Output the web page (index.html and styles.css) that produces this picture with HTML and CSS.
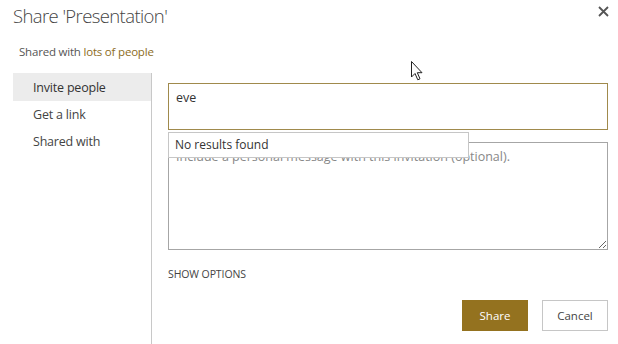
FILE: index.html
```html
<!DOCTYPE html>
<html lang="en">
<head>
    <meta charset="UTF-8">
    <meta name="viewport" content="width=device-width, initial-scale=1.0">
    <title>Share</title>
    <link rel="stylesheet" href="styles.css">
</head>
<body>
    <div id="dialog">
        <div id="header">
            <h1 id="title">Share 'Presentation'</h1>
            <button class="close" title="Close">
                <svg width="11" height="11" viewBox="0 0 11 11"><path d="M1 1 L10 10 M10 1 L1 10" stroke="#555" stroke-width="1.8" fill="none"/></svg>
            </button>
        </div>
        <div id="sharedWith">Shared with <a href="#">lots of people</a></div>

        <div id="content">
            <div id="nav">
                <div class="navItem selected">Invite people</div>
                <div class="navItem">Get a link</div>
                <div class="navItem">Shared with</div>
            </div>
            <div id="main">
                <div class="pickerWrap">
                    <div id="picker">eve</div>
                    <div id="suggest">No results found</div>
                </div>
                <textarea id="message" placeholder="Include a personal message with this invitation (optional)."></textarea>
                <div id="options">SHOW OPTIONS</div>
                <div id="actions">
                    <button class="btn primary">Share</button>
                    <button class="btn">Cancel</button>
                </div>
            </div>
        </div>
        <svg class="cursor" width="14" height="22" viewBox="0 0 14 22"><path d="M1.5 1.5 L1.5 17 L5 13.5 L7.8 19.8 L10 18.8 L7.3 12.7 L12 12.7 Z" fill="#fff" stroke="#222" stroke-width="1"/></svg>
    </div>
</body>
</html>
```

FILE: styles.css
```css
body{
    margin: 0;
    background: #fff;
    font-family: "Open Sans", "Noto Sans", sans-serif;
    color: #444;
}
#dialog{
    position: relative;
    width: 618px;
    height: 344px;
    overflow: hidden;
}
#header{
    display: flex;
    justify-content: space-between;
    align-items: flex-start;
    padding: 2px 4px 0 13px;
}
#title{
    margin: 0;
    font-size: 18.5px;
    font-weight: 300;
    color: #444;
    letter-spacing: -0.6px;
    line-height: 28px;
}
.close{
    border: none;
    background: none;
    padding: 3px 5px;
    cursor: pointer;
}
#sharedWith{
    margin: 14px 0 0 19px;
    font-size: 11.5px;
    color: #555;
    letter-spacing: -0.2px;
    height: 16px;
}
#sharedWith a{
    color: #8c6c1c;
    text-decoration: none;
}
#content{
    display: flex;
    margin-top: 13px;
    padding-left: 13px;
}
#nav{
    width: 138px;
    border-right: 1px solid #c8c8c8;
    height: 280px;
}
.navItem{
    height: 27px;
    line-height: 27px;
    padding-left: 20px;
    font-size: 12.5px;
    color: #444;
    letter-spacing: -0.2px;
}
.selected{
    background: #ececec;
    height: 28px;
    line-height: 29px;
    color: #333;
}
#main{
    flex: 1;
    padding: 10px 10px 0 16px;
}
.pickerWrap{
    position: relative;
}
#picker{
    box-sizing: border-box;
    height: 47px;
    border: 1px solid #a08a4c;
    padding: 5px 7px;
    font-size: 12.5px;
    color: #333;
}
#suggest{
    position: absolute;
    top: 49px;
    left: 0;
    width: 301px;
    height: 26px;
    box-sizing: border-box;
    background: #fff;
    border: 1px solid #c6c6c6;
    padding: 0 6px;
    line-height: 24px;
    font-size: 12px;
    color: #333;
    z-index: 2;
}
#message{
    display: block;
    box-sizing: border-box;
    width: 100%;
    height: 108px;
    margin-top: 12px;
    border: 1px solid #a6a6a6;
    padding: 5px 7px;
    font-family: inherit;
    font-size: 12.5px;
    resize: vertical;
}
#message::placeholder{
    color: #888;
}
#options{
    margin-top: 17px;
    font-size: 10.5px;
    color: #444;
    letter-spacing: -0.1px;
}
#actions{
    display: flex;
    justify-content: flex-end;
    gap: 14px;
    margin-top: 19px;
}
.btn{
    width: 66px;
    height: 31px;
    border: 1px solid #c6c6c6;
    background: #fff;
    font-family: inherit;
    font-size: 11.5px;
    color: #444;
}
.primary{
    background: #94721f;
    border-color: #94721f;
    color: #fff;
}
.cursor{
    position: absolute;
    left: 410px;
    top: 60px;
}
```
